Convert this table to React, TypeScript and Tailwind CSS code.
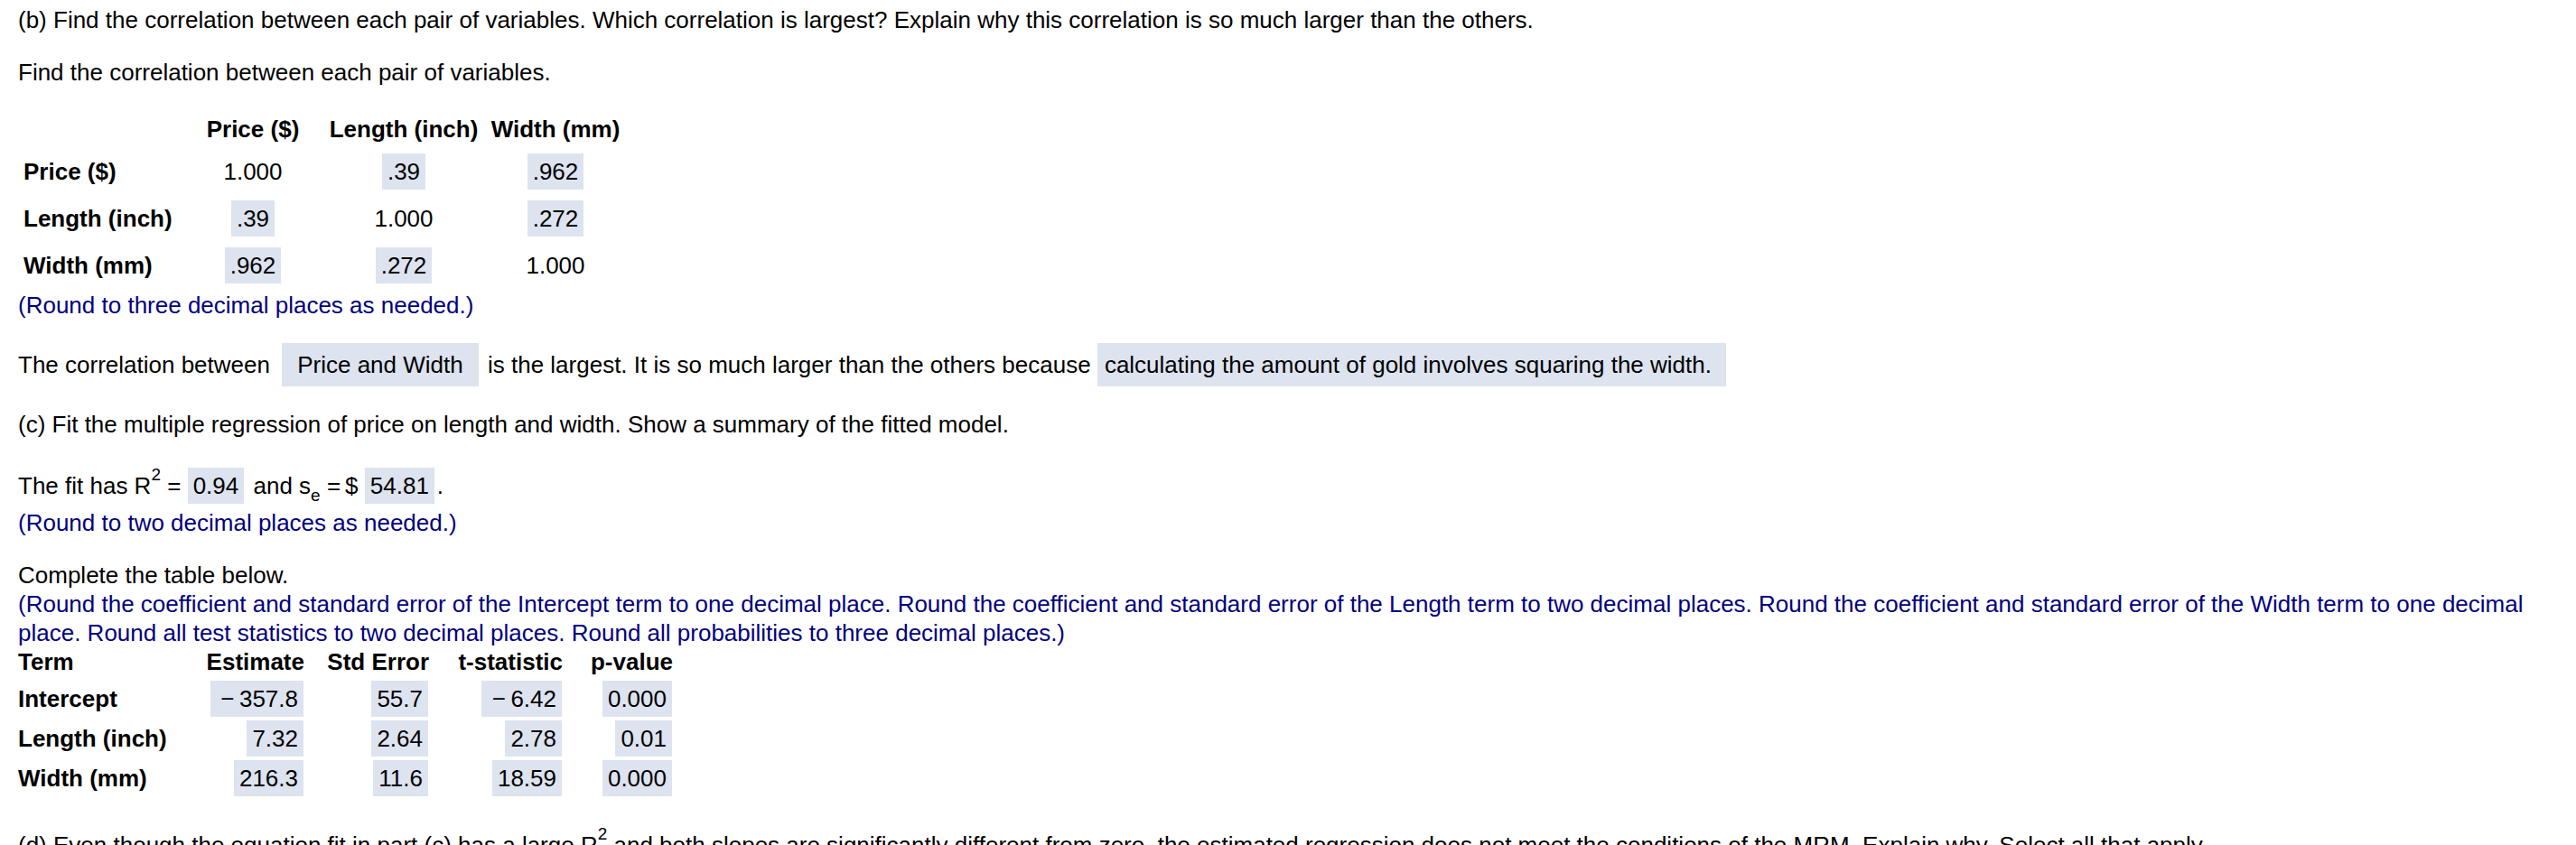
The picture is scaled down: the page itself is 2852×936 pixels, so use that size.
import React from "react";

// correlation matrix
const corrCols = ["Price ($)", "Length (inch)", "Width (mm)"];
const corrRows = [
  { label: "Price ($)", values: ["1.000", ".39", ".962"] },
  { label: "Length (inch)", values: [".39", "1.000", ".272"] },
  { label: "Width (mm)", values: [".962", ".272", "1.000"] },
];

// regression summary
const regCols = ["Estimate", "Std Error", "t-statistic", "p-value"];
const regRows = [
  { label: "Intercept", values: ["−357.8", "55.7", "−6.42", "0.000"] },
  { label: "Length (inch)", values: ["7.32", "2.64", "2.78", "0.01"] },
  { label: "Width (mm)", values: ["216.3", "11.6", "18.59", "0.000"] },
];

function Answer({ value }: { value: string }) {
  const neg = value.startsWith("−");
  return (
    <span className="inline-block h-[40px] leading-[40px] px-[6px] bg-[#dde3ef] whitespace-nowrap">
      {neg && <span className="inline-block w-[26px] text-center">−</span>}
      {neg ? value.slice(1) : value}
    </span>
  );
}

export default function App() {
  return (
    <div className="min-h-screen bg-white text-black font-['Liberation_Sans',Arial,sans-serif] text-[26px] leading-[32px] pl-[20px] pr-[8px] pt-[6px]">
      <div>
        (b) Find the correlation between each pair of variables. Which correlation is largest? Explain why this
        correlation is so much larger than the others.
      </div>

      <div className="mt-[26px]">Find the correlation between each pair of variables.</div>

      {/* correlation table */}
      <div className="mt-[26px] grid grid-cols-[183px_154px_180px_156px] grid-rows-[42px_52px_52px_52px]">
        <div />
        {corrCols.map((c) => (
          <div key={c} className="flex items-center justify-center font-bold whitespace-nowrap">
            {c}
          </div>
        ))}
        {corrRows.map((row) => (
          <React.Fragment key={row.label}>
            <div className="flex items-center pl-[6px] font-bold whitespace-nowrap">{row.label}</div>
            {row.values.map((v, i) => (
              <div key={i} className="flex items-center justify-center">
                {v === "1.000" ? <span>{v}</span> : <Answer value={v} />}
              </div>
            ))}
          </React.Fragment>
        ))}
      </div>
      <div className="mt-[2px] text-[#000080]">(Round to three decimal places as needed.)</div>

      <div className="mt-[26px] whitespace-nowrap">
        The correlation between{" "}
        <span className="inline-block h-[48px] leading-[48px] px-[17px] ml-[6px] mr-[3px] bg-[#dde3ef]">
          Price and Width
        </span>{" "}
        is the largest. It is so much larger than the others because{" "}
        <span className="inline-block h-[48px] leading-[48px] w-[696px] pl-[8px] bg-[#dde3ef]">
          calculating the amount of gold involves squaring the width.
        </span>
      </div>

      <div className="mt-[26px]">(c) Fit the multiple regression of price on length and width. Show a summary of the fitted model.</div>

      <div className="mt-[32px] whitespace-nowrap">
        The fit has R<span className="relative -top-[15px] text-[19px] leading-none">2</span> ={" "}
        <Answer value="0.94" />
        <span className="ml-[3px]"> and s</span>
        <span className="relative top-[8px] text-[19px] leading-none">e</span> =<span className="ml-[5px]">$</span>{" "}
        <Answer value="54.81" />
        <span className="ml-[3px]">.</span>
      </div>
      <div className="mt-[5px] text-[#000080]">(Round to two decimal places as needed.)</div>

      <div className="mt-[26px]">Complete the table below.</div>
      <div className="text-[#000080]">
        <div className="whitespace-nowrap">
          (Round the coefficient and standard error of the Intercept term to one decimal place. Round the coefficient
          and standard error of the Length term to two decimal places. Round the coefficient and standard error of the
          Width term to one decimal
        </div>
        <div className="whitespace-nowrap">
          place. Round all test statistics to two decimal places. Round all probabilities to three decimal places.)
        </div>
      </div>

      {/* regression table */}
      <div className="grid grid-cols-[198px_119px_138px_148px_122px] grid-rows-[35px_44px_44px_44px]">
        <div className="font-bold">Term</div>
        {regCols.map((c) => (
          <div key={c} className="text-right font-bold whitespace-nowrap">
            {c}
          </div>
        ))}
        {regRows.map((row) => (
          <React.Fragment key={row.label}>
            <div className="flex items-center font-bold whitespace-nowrap">{row.label}</div>
            {row.values.map((v, i) => (
              <div key={i} className="flex items-center justify-end pr-[1px]">
                <Answer value={v} />
              </div>
            ))}
          </React.Fragment>
        ))}
      </div>

      <div className="mt-[36px] whitespace-nowrap">
        (d) Even though the equation fit in part (c) has a large R
        <span className="relative -top-[15px] text-[19px] leading-none">2</span> and both slopes are significantly
        different from zero, the estimated regression does not meet the conditions of the MRM. Explain why. Select all
        that apply.
      </div>
    </div>
  );
}
